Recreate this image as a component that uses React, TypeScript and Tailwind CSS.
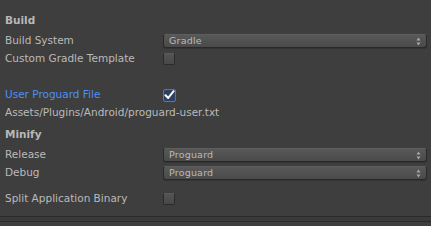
import React from 'react';

const font = { fontFamily: '"DejaVu Sans", "Liberation Sans", sans-serif' };

function Arrows() {
  return (
    <svg width="5" height="9" viewBox="0 0 5 9" className="shrink-0">
      <path d="M2.5 0.5 L4.5 3.5 L0.5 3.5 Z" fill="#a8a8a8" />
      <path d="M2.5 8.5 L4.5 5.5 L0.5 5.5 Z" fill="#a8a8a8" />
    </svg>
  );
}

function Dropdown({ value }: { value: string }) {
  return (
    <div className="flex h-[14px] flex-1 items-center justify-between rounded-[3px] border border-[#2a2a2a] border-t-[#5e5e5e] bg-gradient-to-b from-[#585858] to-[#4a4a4a] pl-[5px] pr-[5px] text-[9.5px] leading-none tracking-[0.2px] text-[#bababa] shadow-[0_1px_0_#333]">
      <span>{value}</span>
      <Arrows />
    </div>
  );
}

function Checkbox({ checked }: { checked?: boolean }) {
  if (checked) {
    return (
      <div className="flex size-[13px] items-center justify-center rounded-[2px] border border-[#3f74ec] bg-[#2f3f5e]">
        <svg width="11" height="10" viewBox="0 0 11 10">
          <path d="M1.5 5.2 L4.2 8 L9.6 1.2" fill="none" stroke="#ffffff" strokeWidth="2" strokeLinecap="round" strokeLinejoin="round" />
        </svg>
      </div>
    );
  }
  return (
    <div className="size-[12px] rounded-[2px] border border-[#2b2b2b] border-t-[#5a5a5a] bg-gradient-to-b from-[#545454] to-[#484848]" />
  );
}

function Row({ label, children, blue }: { label: string; children?: React.ReactNode; blue?: boolean }) {
  return (
    <div className="flex h-[18px] items-center">
      <span className={`w-[158px] shrink-0 text-[10.5px] ${blue ? 'text-[#4f8ff5]' : 'text-[#bababa]'}`}>{label}</span>
      <div className="flex flex-1 items-center pr-[4px]">{children}</div>
    </div>
  );
}

function Header({ label }: { label: string }) {
  return (
    <div className="flex h-[18px] items-center text-[10.5px] font-bold text-[#b8b8b8]">{label}</div>
  );
}

export default function App() {
  return (
    <div className="flex h-[226px] w-[431px] flex-col overflow-hidden bg-[#3e3e3e]" style={font}>
      <div className="flex flex-col pl-[5px] pt-[12px]">
        <Header label="Build" />
        <div className="h-[2px]" />
        <Row label="Build System">
          <Dropdown value="Gradle" />
        </Row>
        <Row label="Custom Gradle Template">
          <Checkbox />
        </Row>
        <div className="h-[18px]" />
        <Row label="User Proguard File" blue>
          <Checkbox checked />
        </Row>
        <div className="flex h-[18px] items-center text-[10.5px] text-[#bababa]">Assets/Plugins/Android/proguard-user.txt</div>
        <div className="h-[4px]" />
        <Header label="Minify" />
        <div className="h-[2px]" />
        <Row label="Release">
          <Dropdown value="Proguard" />
        </Row>
        <Row label="Debug">
          <Dropdown value="Proguard" />
        </Row>
        <div className="h-[8px]" />
        <Row label="Split Application Binary">
          <Checkbox />
        </Row>
      </div>
      <div className="mt-[8px] h-px bg-[#2a2a2a]" />
      <div className="h-[4px] bg-[#3a3a3a]" />
      <div className="h-px bg-[#2a2a2a]" />
    </div>
  );
}
